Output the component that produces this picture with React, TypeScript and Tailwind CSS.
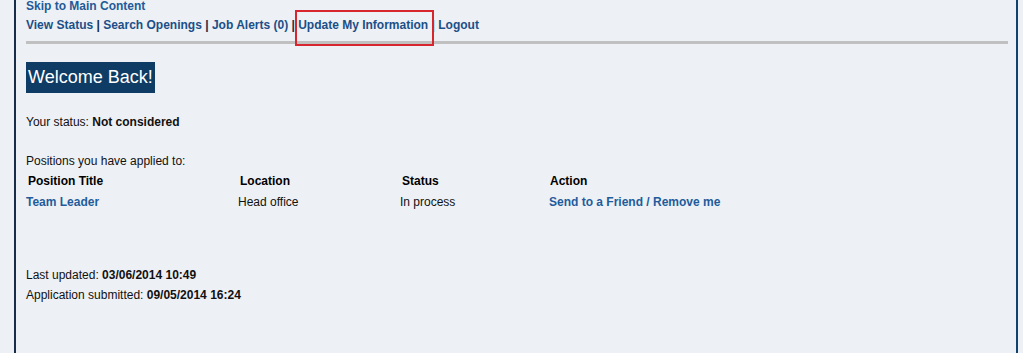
import React from "react";

const font = { fontFamily: '"Liberation Sans", Arial, sans-serif' };

export default function App() {
  return (
    <div className="min-h-[353px] w-full bg-[#edf0f4] text-[12px] text-[#111]" style={font}>
      <div className="ml-[14px] w-[1004px] min-h-[353px] border-l-2 border-r-2 border-l-[#1a2c47] border-r-[#104370] pl-[10px] pr-[8px]">
        <a href="#main" className="block leading-[12px] font-bold text-[#1f5a99] no-underline">
          Skip to Main Content
        </a>
        <nav className="mt-[6px] leading-[14px] font-bold text-[#1b4f88]">
          <a href="#">View Status</a>
          <span className="text-[#1a2c47]"> | </span>
          <a href="#">Search Openings</a>
          <span className="text-[#1a2c47]"> | </span>
          <a href="#">Job Alerts (0)</a>
          <span className="text-[#1a2c47]"> | </span>
          <span className="relative">
            <a href="#">Update My Information</a>
            <span className="pointer-events-none absolute left-[-3px] top-[-8px] h-[36px] w-[139px] border-2 border-[#d7262e]" />
          </span>
          <span className="text-[#1a2c47]"> | </span>
          <a href="#">Logout</a>
        </nav>
        <div className="mt-[9px] h-[3px] bg-[#c0c0c0]" />
        <div id="main" className="mt-[18px] inline-block h-[31px] bg-[#0e3c64] px-[2px] text-[18px] leading-[31px] text-white">
          Welcome Back!
        </div>
        <div className="mt-[22px] leading-[14px]">
          Your status: <b>Not considered</b>
        </div>
        <div className="mt-[25px] leading-[14px]">Positions you have applied to:</div>
        <div className="mt-[3px]">
          <div className="flex leading-[21px] font-bold text-black">
            <div className="w-[212px] pl-[2px]">Position Title</div>
            <div className="w-[162px] pl-[2px]">Location</div>
            <div className="w-[149px] pl-[2px]">Status</div>
            <div className="pl-[1px]">Action</div>
          </div>
          <div className="flex leading-[21px]">
            <div className="w-[212px]">
              <a href="#" className="font-bold text-[#1f5c9c]">Team Leader</a>
            </div>
            <div className="w-[162px]">Head office</div>
            <div className="w-[149px]">In process</div>
            <div className="font-bold text-[#1f5c9c]">
              <a href="#">Send to a Friend</a> / <a href="#">Remove me</a>
            </div>
          </div>
        </div>
        <div className="mt-[52px] leading-[20px]">
          <div>
            Last updated: <b>03/06/2014 10:49</b>
          </div>
          <div>
            Application submitted: <b>09/05/2014 16:24</b>
          </div>
        </div>
      </div>
    </div>
  );
}
